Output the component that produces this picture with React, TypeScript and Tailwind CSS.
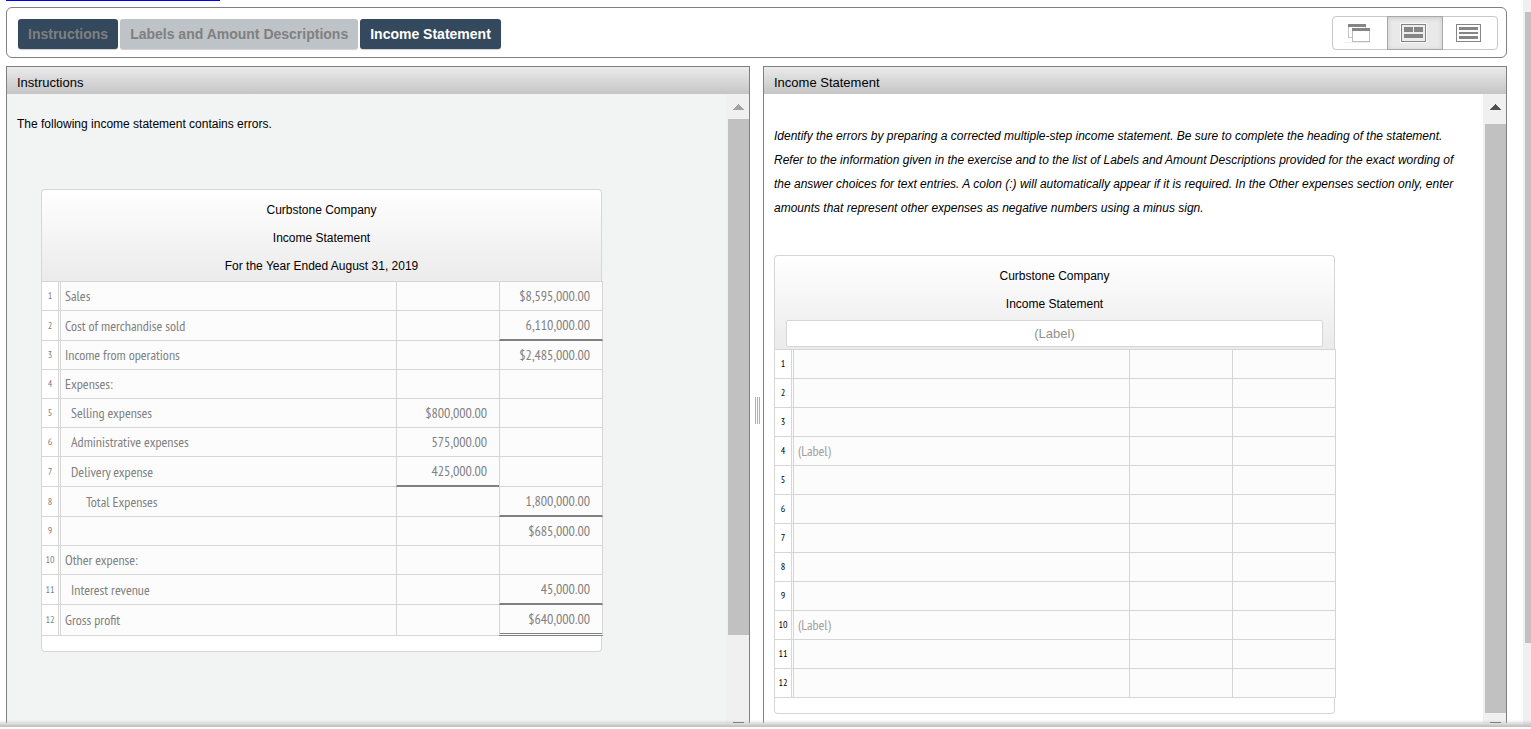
import React from 'react';

type Rule = 'single' | 'double';

interface StatementRow {
  label?: string;
  indent?: 1 | 2;
  detail?: string;
  total?: string;
  detailRule?: Rule;
  totalRule?: Rule;
}

const statementRows: StatementRow[] = [
  { label: 'Sales', total: '$8,595,000.00' },
  { label: 'Cost of merchandise sold', total: '6,110,000.00', totalRule: 'single' },
  { label: 'Income from operations', total: '$2,485,000.00' },
  { label: 'Expenses:' },
  { label: 'Selling expenses', indent: 1, detail: '$800,000.00' },
  { label: 'Administrative expenses', indent: 1, detail: '575,000.00' },
  { label: 'Delivery expense', indent: 1, detail: '425,000.00', detailRule: 'single' },
  { label: 'Total Expenses', indent: 2, total: '1,800,000.00', totalRule: 'single' },
  { total: '$685,000.00' },
  { label: 'Other expense:' },
  { label: 'Interest revenue', indent: 1, total: '45,000.00', totalRule: 'single' },
  { label: 'Gross profit', total: '$640,000.00', totalRule: 'double' },
];

const answerRows = ['', '', '', '(Label)', '', '', '', '', '', '(Label)', '', ''];

const ruleClass = (rule?: Rule) => {
  if (rule === 'double') return 'border-b-3 border-b-[#808080] [border-bottom-style:double]';
  if (rule === 'single') return 'border-b-2 border-b-[#808080]';
  return 'border-b';
};

const indentClass = (indent?: 1 | 2) => {
  if (indent === 2) return 'pl-[25px]';
  if (indent === 1) return 'pl-[10px]';
  return 'pl-1';
};

const rowHeight = (row: StatementRow) => {
  if (row.totalRule === 'double') return 'h-[31px]';
  return row.totalRule || row.detailRule ? 'h-[30px]' : 'h-[29px]';
};

const Columns: React.FC = () => (
  <colgroup>
    <col className="w-[17px]" />
    <col />
    <col className="w-[103px]" />
    <col className="w-[104px]" />
  </colgroup>
);

const tableClass =
  "w-[562px] table-fixed border-separate border-spacing-0 border-t border-[#d6d6d6] bg-[#fcfcfc] text-sm leading-5 font-['PT_Sans_Narrow','Open_Sans_Condensed','Roboto_Condensed',Lato,sans-serif]";
const numberClass = 'border-l border-b border-[#d6d6d6] bg-white p-0 text-center text-[10px] font-normal';
const labelClass = 'border-l-3 border-[#d6d6d6] [border-left-style:double] p-0';

const ScrollBar: React.FC<{ dark?: boolean }> = ({ dark }) => (
  <div className={`flex w-[23px] shrink-0 flex-col bg-[#f0f0f0] pl-0.5 ${dark ? 'text-[#505050]' : 'text-[#a3a3a3]'}`}>
    <div className={`flex shrink-0 justify-center pt-2.5 ${dark ? 'h-[30px]' : 'h-[25px]'}`}>
      <svg width="11" height="6" viewBox="0 0 11 6" fill="currentColor" shapeRendering="crispEdges">
        <path d="M5 0h1v1h1v1h1v1h1v1h1v1h1v1H0V5h1V4h1V3h1V2h1V1h1z" />
      </svg>
    </div>
    <div className={`bg-[#c1c1c1] ${dark ? 'basis-[589px]' : 'basis-[516px]'}`}></div>
    <div className="mt-auto flex justify-center">
      <div className="h-px w-[11px] bg-[#606060]"></div>
    </div>
  </div>
);

const Panel: React.FC<{ title: string; dark?: boolean; className: string; children: React.ReactNode }> = ({
  title,
  dark,
  className,
  children,
}) => (
  <section className="flex min-w-0 flex-1 flex-col border border-b-0 border-[#808080]">
    <h2 className="h-[27px] shrink-0 bg-linear-to-b from-[#ebebeb] to-[#c5c5c5] px-2.5 pt-1.5 text-[13px] leading-5">
      {title}
    </h2>
    <div className="flex min-h-0 flex-1">
      <div className={`min-w-0 flex-1 overflow-hidden pl-2.5 ${className}`}>{children}</div>
      <ScrollBar dark={dark} />
    </div>
  </section>
);

const InstructionsStatement: React.FC = () => (
  <div className="mt-[53px] ml-6 w-[561px]">
    <div className="rounded-t border border-b-0 border-[#d6d6d6] bg-linear-to-b from-white to-[#ebebeb] pt-1.5 pb-px text-center leading-7">
      <div>Curbstone Company</div>
      <div>Income Statement</div>
      <div>For the Year Ended August 31, 2019</div>
    </div>
    <table className={`${tableClass} text-[#808080]`}>
      <Columns />
      <tbody>
        {statementRows.map((row, index) => (
          <tr key={index} className={rowHeight(row)}>
            <th scope="row" className={numberClass}>{index + 1}</th>
            <td className={`${labelClass} border-b ${indentClass(row.indent)}`}>{row.label}</td>
            <td className={`border-l border-[#d6d6d6] p-0 pr-3 text-right ${ruleClass(row.detailRule)}`}>{row.detail}</td>
            <td className={`border-x border-[#d6d6d6] p-0 pr-3 text-right ${ruleClass(row.totalRule)}`}>{row.total}</td>
          </tr>
        ))}
      </tbody>
    </table>
    <div className="h-4 rounded-b border border-t-0 border-[#d6d6d6] bg-white"></div>
  </div>
);

const AnswerStatement: React.FC = () => (
  <div className="mt-[35px] w-[561px]">
    <div className="rounded-t border border-b-0 border-[#d6d6d6] bg-linear-to-b from-white to-[#ebebeb] px-[11px] pt-1.5 pb-0.5 text-center leading-7">
      <div>Curbstone Company</div>
      <div>Income Statement</div>
      <input
        aria-label="Statement date"
        placeholder="(Label)"
        className="mt-0.5 block h-[27px] w-full rounded-xs border border-[#d6d6d6] bg-white text-center text-[13px] placeholder:text-[#909090]"
      />
    </div>
    <table className={tableClass}>
      <Columns />
      <tbody>
        {answerRows.map((placeholder, index) => (
          <tr key={index} className="h-[29px]">
            <th scope="row" className={numberClass}>{index + 1}</th>
            <td className={`${labelClass} border-b`}>
              <input
                aria-label={`Line ${index + 1} description`}
                placeholder={placeholder}
                className="block h-7 w-full bg-transparent pl-1 placeholder:text-[#a0a0a0]"
              />
            </td>
            <td className="border-b border-l border-[#d6d6d6] p-0">
              <input aria-label={`Line ${index + 1} amount`} className="block h-7 w-full bg-transparent pr-3 text-right" />
            </td>
            <td className="border-x border-b border-[#d6d6d6] p-0">
              <input aria-label={`Line ${index + 1} total`} className="block h-7 w-full bg-transparent pr-3 text-right" />
            </td>
          </tr>
        ))}
      </tbody>
    </table>
    <div className="h-4 rounded-b border border-t-0 border-[#d6d6d6] bg-white"></div>
  </div>
);

const ViewSwitch: React.FC = () => (
  <div className="flex h-[34px] rounded border border-[#c8c8c8] bg-white">
    <button aria-label="Stacked windows" className="flex w-[54px] items-center justify-center pr-1">
      <svg width="26" height="20" viewBox="0 0 26 20" shapeRendering="crispEdges">
        <path d="M3.500 4v10.500h4" fill="none" stroke="#c4c4c4" />
        <rect x="3" y="1" width="18" height="3" fill="#858585" />
        <path d="M20.500 4v1" stroke="#c4c4c4" />
        <rect x="7.500" y="6.500" width="17" height="12" fill="#fff" stroke="#bdbdbd" />
        <rect x="7" y="5" width="18" height="3" fill="#858585" />
        <path d="M0 19.500h26" stroke="#ededed" />
      </svg>
    </button>
    <button
      aria-label="Split view"
      aria-pressed="true"
      className="-my-px flex w-14 items-center justify-center border border-[#a8a8a8] bg-[#e9e9e9] pr-[3px] shadow-[inset_0_1px_4px_#c8c8c8]"
    >
      <svg width="27" height="20" viewBox="0 0 27 20" shapeRendering="crispEdges">
        <rect width="27" height="20" fill="#fafafa" />
        <rect x="1.500" y="1.500" width="24" height="17" fill="#ededed" stroke="#858585" />
        <rect x="4" y="4" width="9" height="5" fill="#858585" />
        <rect x="14" y="4" width="9" height="5" fill="#858585" />
        <rect x="4" y="11" width="19" height="4" fill="#858585" />
      </svg>
    </button>
    <button aria-label="List view" className="flex w-[54px] items-center justify-center pr-[3px]">
      <svg width="25" height="18" viewBox="0 0 25 18" shapeRendering="crispEdges">
        <rect x="0.500" y="0.500" width="24" height="17" fill="#fff" stroke="#858585" />
        <path d="M3 3h19v3H3zM3 8h19v2H3zM3 12h19v3H3z" fill="#858585" />
      </svg>
    </button>
  </div>
);

const tabs = [
  { name: 'Instructions', style: 'bg-[#34495e] text-[#808080]' },
  { name: 'Labels and Amount Descriptions', style: 'bg-[#bdc3c7] text-[#808080]' },
  { name: 'Income Statement', style: 'bg-[#34495e] text-white' },
];

const App: React.FC = () => {
  return (
    <div className="relative flex h-screen overflow-hidden bg-white text-xs text-black font-['Liberation_Sans',Arial,sans-serif]">
      <div className="flex min-w-0 flex-1 flex-col pr-4 pb-1.5 pl-1.5">
        <a href="#top" aria-label="Back" className="mb-1.5 block w-[214px] shrink-0 border-t border-[#0000ee]"></a>

        <header className="flex h-[51px] shrink-0 items-center justify-between rounded-md border border-[#808080] pr-2 pl-[11px]">
          <nav className="flex gap-0.5 pt-0.5">
            {tabs.map((tab) => (
              <button
                key={tab.name}
                className={`h-[30px] rounded-[3px] px-2.5 text-sm font-bold shadow-[0_1px_1px_#d0d0d0] ${tab.style}`}
              >
                {tab.name}
              </button>
            ))}
          </nav>
          <ViewSwitch />
        </header>

        <main className="mt-2 flex min-h-0 flex-1">
          <Panel title="Instructions" className="bg-[#f2f4f4] pt-[18px]">
            <p className="leading-6">The following income statement contains errors.</p>
            <InstructionsStatement />
          </Panel>

          <div className="flex w-[13px] shrink-0 items-center justify-center pt-8 pl-px">
            <div className="flex h-[27px] w-[5px] justify-between">
              <div className="w-px bg-[#b0b0b0]"></div>
              <div className="w-px bg-[#b0b0b0]"></div>
              <div className="w-px bg-[#b0b0b0]"></div>
            </div>
          </div>

          <Panel title="Income Statement" dark className="bg-white pt-[30px] pr-5">
            <p className="leading-6 italic">
              Identify the errors by preparing a corrected multiple-step income statement. Be sure to complete the
              heading of the statement. Refer to the information given in the exercise and to the list of Labels and
              Amount Descriptions provided for the exact wording of the answer choices for text entries. A colon (:)
              will automatically appear if it is required. In the Other expenses section only, enter amounts that
              represent other expenses as negative numbers using a minus sign.
            </p>
            <AnswerStatement />
          </Panel>
        </main>
      </div>

      <div className="w-2 shrink-0 bg-[#f0f0f0] pt-3 pl-0.5">
        <div className="h-[631px] bg-[#c1c1c1]"></div>
      </div>

      <div className="pointer-events-none absolute inset-x-0 bottom-0 h-[9px]">
        <div className="h-[7px] bg-linear-to-b from-transparent to-[#bcbcbc]"></div>
        <div className="h-0.5 bg-white"></div>
      </div>
    </div>
  );
};

export default App;
